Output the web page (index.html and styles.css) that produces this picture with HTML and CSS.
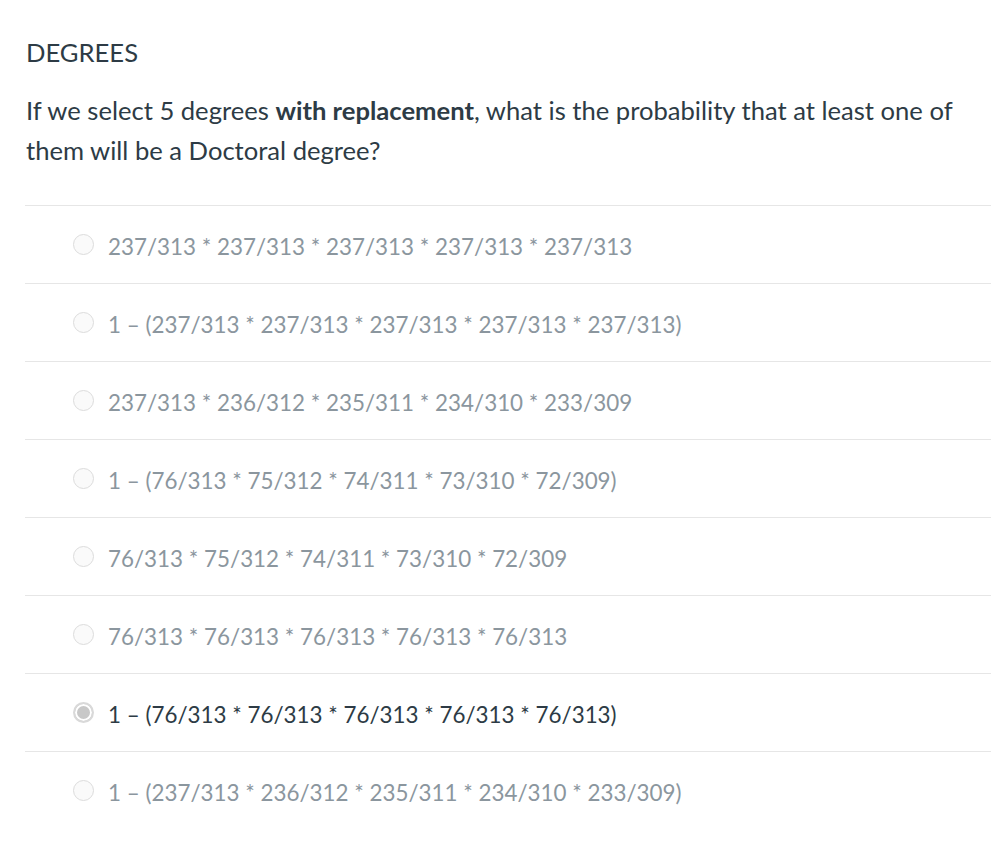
FILE: index.html
```html
<!DOCTYPE html>
<html>
<head>
<meta charset="utf-8">
<link rel="stylesheet" href="styles.css">
</head>
<body>
<div class="quiz">
  <div class="title">DEGREES</div>
  <div class="question">If we select 5 degrees <strong>with replacement</strong>, what is the probability that at least one of them will be a Doctoral degree?</div>
  <div class="answers">
    <div class="answer"><span class="radio"></span><span class="label">237/313 * 237/313 * 237/313 * 237/313 * 237/313</span></div>
    <div class="answer"><span class="radio"></span><span class="label">1 – (237/313 * 237/313 * 237/313 * 237/313 * 237/313)</span></div>
    <div class="answer"><span class="radio"></span><span class="label">237/313 * 236/312 * 235/311 * 234/310 * 233/309</span></div>
    <div class="answer"><span class="radio"></span><span class="label">1 – (76/313 * 75/312 * 74/311 * 73/310 * 72/309)</span></div>
    <div class="answer"><span class="radio"></span><span class="label">76/313 * 75/312 * 74/311 * 73/310 * 72/309</span></div>
    <div class="answer"><span class="radio"></span><span class="label">76/313 * 76/313 * 76/313 * 76/313 * 76/313</span></div>
    <div class="answer selected"><span class="radio"></span><span class="label">1 – (76/313 * 76/313 * 76/313 * 76/313 * 76/313)</span></div>
    <div class="answer last"><span class="radio"></span><span class="label">1 – (237/313 * 236/312 * 235/311 * 234/310 * 233/309)</span></div>
  </div>
</div>
</body>
</html>
```
FILE: styles.css
```css
html, body {
  margin: 0;
  padding: 0;
  background: #ffffff;
}
body {
  font-family: Lato, "Open Sans", sans-serif;
  color: #2d3b45;
}
.quiz {
  padding: 34px 17px 0 25px;
}
.title {
  font-size: 25.6px;
  line-height: 36px;
  padding-left: 1px;
}
.question {
  margin-top: 20px;
  font-size: 25.6px;
  line-height: 40px;
  padding-left: 1px;
}
.question strong {
  font-weight: 700;
}
.answers {
  margin-top: 35px;
}
.answer {
  display: flex;
  align-items: center;
  height: 77px;
  border-top: 1px solid #e6e6e6;
  padding-left: 48px;
  color: #8b969e;
  font-size: 22.4px;
}
.label {
  padding-top: 3px;
}
.radio {
  box-sizing: border-box;
  width: 21px;
  height: 21px;
  border-radius: 50%;
  border: 1px solid #dcdcdc;
  background: #fafafa;
  margin-right: 14px;
  flex: none;
}
.answer.selected {
  color: #2d3b45;
}
.answer.selected .radio {
  border: 2px solid #d9d9d9;
  background: #c8c8c8;
  box-shadow: inset 0 0 0 2px #ffffff;
}
```
